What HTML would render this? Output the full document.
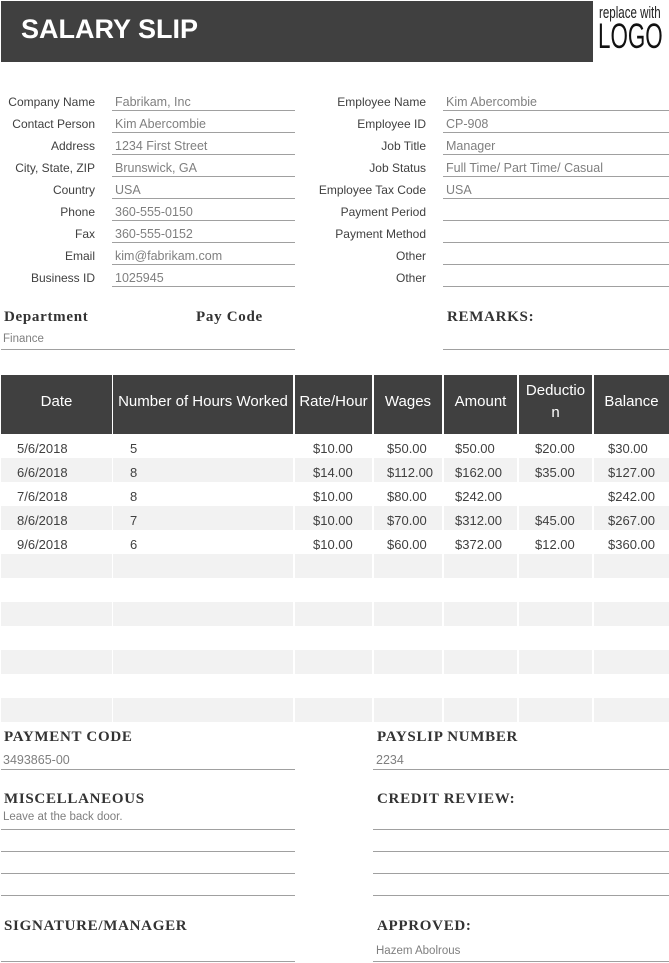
<!DOCTYPE html>
<html><head><meta charset="utf-8"><style>
*{margin:0;padding:0;box-sizing:border-box}
body{width:669px;height:963px;background:#fff;position:relative;overflow:hidden;font-family:"Liberation Sans",sans-serif;color:#404040}
.a{position:absolute;white-space:nowrap}
.lb{font-size:12px;color:#404040;text-align:right}
.v{font-size:12.5px;color:#7f7f7f}
.ln{position:absolute;height:1px;background:#a0a0a0}
.h{font-family:"Liberation Serif",serif;font-weight:bold;font-size:15px;letter-spacing:.7px;color:#333}
.th{position:absolute;top:375px;height:59px;background:#404040;color:#fff;font-size:15px;display:flex;align-items:center;justify-content:center;text-align:center;line-height:22px;padding-top:0}
.g{position:absolute;height:24px;background:#f2f2f2}
.c{position:absolute;font-size:13px;color:#404040}
</style></head><body>
<div class="a" style="left:1px;top:1px;width:592px;height:61px;background:#404040"></div>
<div class="a" style="left:21px;top:14px;font-size:27px;font-weight:bold;color:#fff">SALARY SLIP</div>
<div class="a" style="left:599px;top:3px;font-size:17px;color:#222;transform:scaleX(.68);transform-origin:left">replace with</div>
<div class="a" style="left:598px;top:17px;font-size:35px;color:#111;transform:scaleX(.64);transform-origin:left">LOGO</div>

<div id="f"></div>
<script>
var L=[["Company Name","Fabrikam, Inc"],["Contact Person","Kim Abercombie"],["Address","1234 First Street"],["City, State, ZIP","Brunswick, GA"],["Country","USA"],["Phone","360-555-0150"],["Fax","360-555-0152"],["Email","kim@fabrikam.com"],["Business ID","1025945"]];
var R=[["Employee Name","Kim Abercombie"],["Employee ID","CP-908"],["Job Title","Manager"],["Job Status","Full Time/ Part Time/ Casual"],["Employee Tax Code","USA"],["Payment Period",""],["Payment Method",""],["Other",""],["Other",""]];
var h="";
for(var i=0;i<9;i++){var y=95+i*22;
h+='<div class="a lb" style="right:574px;top:'+y+'px">'+L[i][0]+'</div>';
h+='<div class="a v" style="left:115px;top:'+y+'px">'+L[i][1]+'</div>';
h+='<div class="ln" style="left:112px;width:183px;top:'+(110+i*22)+'px"></div>';
h+='<div class="a lb" style="right:243px;top:'+y+'px">'+R[i][0]+'</div>';
h+='<div class="a v" style="left:446px;top:'+y+'px">'+R[i][1]+'</div>';
h+='<div class="ln" style="left:443px;width:226px;top:'+(110+i*22)+'px"></div>';}
var cols=[[1,111,"Date"],[113,180,"Number of Hours Worked"],[295,77,"Rate/Hour"],[374,68,"Wages"],[444,73,"Amount"],[519,73,"Deductio<br>n"],[594,75,"Balance"]];
cols.forEach(function(c){h+='<div class="th" style="left:'+c[0]+'px;width:'+c[1]+'px"><span style="margin-top:-6px">'+c[2]+'</span></div>';
for(var r=1;r<12;r+=2){h+='<div class="g" style="left:'+c[0]+'px;width:'+c[1]+'px;top:'+(434+r*24)+'px"></div>';}});
var D=[["5/6/2018","5","$10.00","$50.00","$50.00","$20.00","$30.00"],["6/6/2018","8","$14.00","$112.00","$162.00","$35.00","$127.00"],["7/6/2018","8","$10.00","$80.00","$242.00","","$242.00"],["8/6/2018","7","$10.00","$70.00","$312.00","$45.00","$267.00"],["9/6/2018","6","$10.00","$60.00","$372.00","$12.00","$360.00"]];
var cx=[17,130,313,387,455,535,608];
D.forEach(function(r,i){r.forEach(function(t,j){h+='<div class="c" style="left:'+cx[j]+'px;top:'+(441+i*24)+'px">'+t+'</div>';});});
document.getElementById("f").innerHTML=h;
</script>

<div class="a h" style="left:4px;top:309px">Department</div>
<div class="a h" style="left:196px;top:309px">Pay Code</div>
<div class="a h" style="left:447px;top:309px">REMARKS:</div>
<div class="a v" style="left:3px;top:333px;font-size:11.5px">Finance</div>
<div class="ln" style="left:1px;width:294px;top:349px"></div>
<div class="ln" style="left:443px;width:226px;top:349px"></div>

<div class="a h" style="left:4px;top:729px">PAYMENT CODE</div>
<div class="a h" style="left:377px;top:729px">PAYSLIP NUMBER</div>
<div class="a v" style="left:3px;top:753px">3493865-00</div>
<div class="a v" style="left:376px;top:753px">2234</div>
<div class="ln" style="left:1px;width:294px;top:769px"></div>
<div class="ln" style="left:373px;width:296px;top:769px"></div>

<div class="a h" style="left:4px;top:791px">MISCELLANEOUS</div>
<div class="a h" style="left:377px;top:791px">CREDIT REVIEW:</div>
<div class="a v" style="left:3px;top:811px;font-size:11.5px">Leave at the back door.</div>
<div class="ln" style="left:1px;width:294px;top:829px"></div>
<div class="ln" style="left:1px;width:294px;top:851px"></div>
<div class="ln" style="left:1px;width:294px;top:873px"></div>
<div class="ln" style="left:1px;width:294px;top:895px"></div>
<div class="ln" style="left:373px;width:296px;top:829px"></div>
<div class="ln" style="left:373px;width:296px;top:851px"></div>
<div class="ln" style="left:373px;width:296px;top:873px"></div>
<div class="ln" style="left:373px;width:296px;top:895px"></div>

<div class="a h" style="left:4px;top:918px">SIGNATURE/MANAGER</div>
<div class="a h" style="left:377px;top:918px">APPROVED:</div>
<div class="a v" style="left:376px;top:945px;font-size:11.5px">Hazem Abolrous</div>
<div class="ln" style="left:1px;width:294px;top:961px"></div>
<div class="ln" style="left:373px;width:296px;top:961px"></div>
</body></html>
